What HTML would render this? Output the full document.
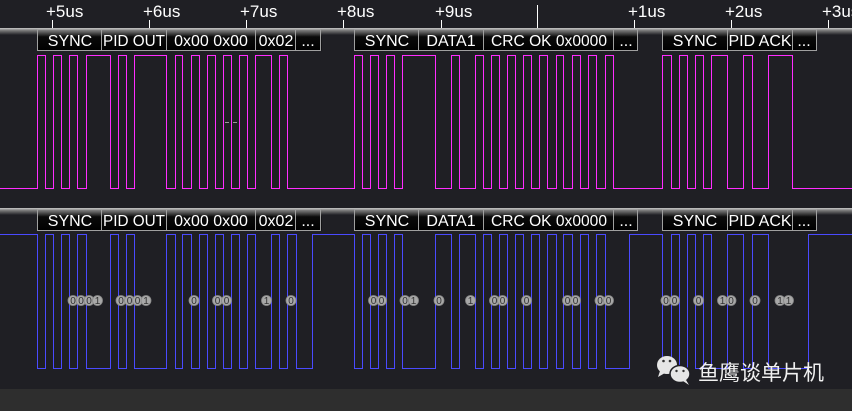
<!DOCTYPE html>
<html><head><meta charset="utf-8"><style>
html,body{margin:0;padding:0;background:#1f1f24;width:852px;height:411px;overflow:hidden}
svg{display:block}
.lb{font-family:"Liberation Sans",sans-serif;font-size:16px;fill:#fff}
.tk{font-family:"Liberation Sans",sans-serif;font-size:17px;fill:#fff}
.bt{font-family:"Liberation Sans",sans-serif;font-size:10px;fill:#333}
</style></head><body>
<svg width="852" height="411" viewBox="0 0 852 411" xmlns="http://www.w3.org/2000/svg">
<defs>
<linearGradient id="bar" x1="0" y1="0" x2="0" y2="1"><stop offset="0" stop-color="#c8c8c8"/><stop offset="0.35" stop-color="#7a7a7a"/><stop offset="1" stop-color="#1f1f24"/></linearGradient>
<linearGradient id="box" x1="0" y1="0" x2="0" y2="1"><stop offset="0" stop-color="#8a8a8a"/><stop offset="0.35" stop-color="#0a0a0a"/><stop offset="1" stop-color="#000"/></linearGradient>
<g id="boxes">
<rect x="37.5" y="0.5" width="284" height="21" fill="url(#box)"/>
<rect x="354.5" y="0.5" width="283" height="21" fill="url(#box)"/>
<rect x="662.5" y="0.5" width="154" height="21" fill="url(#box)"/>
<g fill="none" stroke="#a0a0a0">
<rect x="37.5" y="0.5" width="64" height="21"/><rect x="101.5" y="0.5" width="65" height="21"/><rect x="166.5" y="0.5" width="89" height="21"/><rect x="255.5" y="0.5" width="40" height="21"/><rect x="295.5" y="0.5" width="25" height="21"/>
<rect x="354.5" y="0.5" width="64" height="21"/><rect x="418.5" y="0.5" width="65" height="21"/><rect x="483.5" y="0.5" width="130" height="21"/><rect x="613.5" y="0.5" width="24" height="21"/>
<rect x="662.5" y="0.5" width="65" height="21"/><rect x="727.5" y="0.5" width="65" height="21"/><rect x="792.5" y="0.5" width="24" height="21"/>
</g>
<g class="lb" text-anchor="middle">
<text x="70" y="17">SYNC</text><text x="134" y="17" textLength="62" lengthAdjust="spacingAndGlyphs">PID OUT</text><text x="211" y="17">0x00 0x00</text><text x="276" y="17">0x02</text><text x="308" y="17">...</text>
<text x="387" y="17">SYNC</text><text x="451" y="17">DATA1</text><text x="549" y="17" textLength="116" lengthAdjust="spacingAndGlyphs">CRC OK 0x0000</text><text x="626" y="17">...</text>
<text x="695" y="17">SYNC</text><text x="760" y="17" textLength="63" lengthAdjust="spacingAndGlyphs">PID ACK</text><text x="804" y="17">...</text>
</g>
</g>
</defs>
<rect x="0" y="389" width="852" height="22" fill="#2e2e2e"/>
<rect x="0" y="28" width="852" height="7" fill="url(#bar)"/>
<rect x="0" y="208" width="852" height="7" fill="url(#bar)"/>
<g stroke="#fff" stroke-width="1">
<line x1="52.5" y1="20" x2="52.5" y2="28"/><line x1="149.5" y1="20" x2="149.5" y2="28"/><line x1="246.5" y1="20" x2="246.5" y2="28"/><line x1="343.5" y1="20" x2="343.5" y2="28"/><line x1="441.5" y1="20" x2="441.5" y2="28"/><line x1="537.5" y1="5" x2="537.5" y2="28"/><line x1="634.5" y1="20" x2="634.5" y2="28"/><line x1="731.5" y1="20" x2="731.5" y2="28"/><line x1="828.5" y1="20" x2="828.5" y2="28"/>
</g>
<g class="tk">
<text x="46" y="17">+5us</text><text x="143" y="17">+6us</text><text x="240" y="17">+7us</text><text x="337" y="17">+8us</text><text x="435" y="17">+9us</text><text x="628" y="17">+1us</text><text x="725" y="17">+2us</text><text x="822" y="17">+3us</text>
</g>
<use href="#boxes" x="0" y="29"/>
<use href="#boxes" x="0" y="209"/>
<path fill="none" stroke="#ff2dff" stroke-width="1" d="M0,188.5 H37.5 V55.5 H45.5 V188.5 H53.5 V55.5 H61.5 V188.5 H69.5 V55.5 H77.5 V188.5 H86.5 V55.5 H110.5 V188.5 H118.5 V55.5 H126.5 V188.5 H134.5 V55.5 H166.5 V188.5 H175.5 V55.5 H182.5 V188.5 H191.5 V55.5 H199.5 V188.5 H207.5 V55.5 H215.5 V188.5 H223.5 V55.5 H231.5 V188.5 H239.5 V55.5 H247.5 V188.5 H255.5 V55.5 H271.5 V188.5 H279.5 V55.5 H287.5 V188.5 H354.5 V55.5 H362.5 V188.5 H370.5 V55.5 H378.5 V188.5 H386.5 V55.5 H394.5 V188.5 H402.5 V55.5 H435.5 V188.5 H451.5 V55.5 H459.5 V188.5 H475.5 V55.5 H483.5 V188.5 H491.5 V55.5 H499.5 V188.5 H507.5 V55.5 H515.5 V188.5 H523.5 V55.5 H531.5 V188.5 H539.5 V55.5 H547.5 V188.5 H556.5 V55.5 H563.5 V188.5 H572.5 V55.5 H580.5 V188.5 H588.5 V55.5 H596.5 V188.5 H605.5 V55.5 H613.5 V188.5 H662.5 V55.5 H671.5 V188.5 H679.5 V55.5 H687.5 V188.5 H695.5 V55.5 H703.5 V188.5 H711.5 V55.5 H727.5 V188.5 H743.5 V55.5 H752.5 V188.5 H768.5 V55.5 H792.5 V188.5 H852"/>
<path fill="none" stroke="#4a4aff" stroke-width="1" d="M0,234.5 H37.5 V368.5 H45.5 V234.5 H53.5 V368.5 H61.5 V234.5 H69.5 V368.5 H77.5 V234.5 H86.5 V368.5 H110.5 V234.5 H118.5 V368.5 H126.5 V234.5 H134.5 V368.5 H166.5 V234.5 H175.5 V368.5 H182.5 V234.5 H191.5 V368.5 H199.5 V234.5 H207.5 V368.5 H215.5 V234.5 H223.5 V368.5 H231.5 V234.5 H239.5 V368.5 H247.5 V234.5 H255.5 V368.5 H271.5 V234.5 H279.5 V368.5 H287.5 V234.5 H296.5 V368.5 H312.5 V234.5 H354.5 V368.5 H362.5 V234.5 H370.5 V368.5 H378.5 V234.5 H386.5 V368.5 H394.5 V234.5 H402.5 V368.5 H435.5 V234.5 H451.5 V368.5 H459.5 V234.5 H475.5 V368.5 H483.5 V234.5 H491.5 V368.5 H499.5 V234.5 H507.5 V368.5 H515.5 V234.5 H523.5 V368.5 H531.5 V234.5 H539.5 V368.5 H547.5 V234.5 H556.5 V368.5 H563.5 V234.5 H572.5 V368.5 H580.5 V234.5 H588.5 V368.5 H596.5 V234.5 H605.5 V368.5 H629.5 V234.5 H662.5 V368.5 H671.5 V234.5 H679.5 V368.5 H687.5 V234.5 H695.5 V368.5 H703.5 V234.5 H711.5 V368.5 H727.5 V234.5 H743.5 V368.5 H752.5 V234.5 H768.5 V368.5 H808.5 V234.5 H852"/>
<g stroke="#999" stroke-width="1"><line x1="225" y1="122.5" x2="229" y2="122.5"/><line x1="233" y1="122.5" x2="237" y2="122.5"/></g>
<g fill="#a8a8a8" stroke="#8a8a8a" stroke-width="0.8">
<circle cx="73" cy="300.5" r="5"/><circle cx="81" cy="300.5" r="5"/><circle cx="89" cy="300.5" r="5"/><circle cx="97.5" cy="300.5" r="5"/>
<circle cx="121" cy="300.5" r="5"/><circle cx="129.5" cy="300.5" r="5"/><circle cx="137.5" cy="300.5" r="5"/><circle cx="146" cy="300.5" r="5"/>
<circle cx="194" cy="300.5" r="5"/><circle cx="217.5" cy="300.5" r="5"/><circle cx="226.5" cy="300.5" r="5"/><circle cx="266.5" cy="300.5" r="5"/><circle cx="291" cy="300.5" r="5"/>
<circle cx="373.5" cy="300.5" r="5"/><circle cx="381.5" cy="300.5" r="5"/><circle cx="405" cy="300.5" r="5"/><circle cx="413.5" cy="300.5" r="5"/>
<circle cx="439" cy="300.5" r="5"/><circle cx="470.5" cy="300.5" r="5"/><circle cx="494.5" cy="300.5" r="5"/><circle cx="502.5" cy="300.5" r="5"/><circle cx="526.5" cy="300.5" r="5"/>
<circle cx="567.5" cy="300.5" r="5"/><circle cx="575.5" cy="300.5" r="5"/><circle cx="600" cy="300.5" r="5"/><circle cx="608.5" cy="300.5" r="5"/>
<circle cx="666" cy="300.5" r="5"/><circle cx="674.5" cy="300.5" r="5"/><circle cx="698.5" cy="300.5" r="5"/><circle cx="722.5" cy="300.5" r="5"/><circle cx="731" cy="300.5" r="5"/><circle cx="755" cy="300.5" r="5"/><circle cx="780" cy="300.5" r="5"/><circle cx="788.5" cy="300.5" r="5"/>
</g>
<g class="bt" text-anchor="middle">
<text x="73" y="304">0</text><text x="81" y="304">0</text><text x="89" y="304">0</text><text x="97.5" y="304">1</text>
<text x="121" y="304">0</text><text x="129.5" y="304">0</text><text x="137.5" y="304">0</text><text x="146" y="304">1</text>
<text x="194" y="304">0</text><text x="217.5" y="304">0</text><text x="226.5" y="304">0</text><text x="266.5" y="304">1</text><text x="291" y="304">0</text>
<text x="373.5" y="304">0</text><text x="381.5" y="304">0</text><text x="405" y="304">0</text><text x="413.5" y="304">1</text>
<text x="439" y="304">0</text><text x="470.5" y="304">1</text><text x="494.5" y="304">0</text><text x="502.5" y="304">0</text><text x="526.5" y="304">0</text>
<text x="567.5" y="304">0</text><text x="575.5" y="304">0</text><text x="600" y="304">0</text><text x="608.5" y="304">0</text>
<text x="666" y="304">0</text><text x="674.5" y="304">0</text><text x="698.5" y="304">0</text><text x="722.5" y="304">1</text><text x="731" y="304">0</text><text x="755" y="304">0</text><text x="780" y="304">1</text><text x="788.5" y="304">1</text>
</g>
<g>
<ellipse cx="667" cy="365" rx="10" ry="9" fill="#e6e6e6"/>
<path d="M660,371 L658,377 L665,373 Z" fill="#e6e6e6"/>
<ellipse cx="680" cy="374" rx="10" ry="8.5" fill="#e6e6e6" stroke="#1f1f24" stroke-width="1.5"/>
<path d="M686,380 L689,385 L683,381 Z" fill="#e6e6e6"/>
<circle cx="663.5" cy="361" r="1.3" fill="#333"/><circle cx="670" cy="361" r="1.3" fill="#333"/>
<circle cx="676.5" cy="371" r="1.2" fill="#333"/><circle cx="683.5" cy="371" r="1.2" fill="#333"/>
<text x="698" y="380" font-family="'Liberation Sans','Noto Sans CJK SC',sans-serif" font-size="21" fill="#f0f0f0">鱼鹰谈单片机</text>
</g>
</svg>
</body></html>
